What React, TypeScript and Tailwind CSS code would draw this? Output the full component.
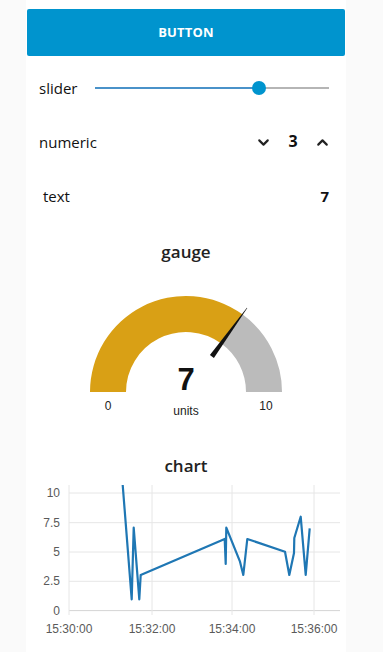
import { ChevronDown, ChevronUp } from "lucide-react";

const series = [
  [96.7, 5],
  [105.7, 119.3],
  [107.7, 47.7],
  [113.3, 119.3],
  [114.7, 95],
  [198.7, 59],
  [199.7, 84],
  [200.3, 47.7],
  [214, 81.7],
  [217.3, 95],
  [221.3, 59],
  [259, 71.7],
  [263.3, 95],
  [268, 73],
  [268.3, 58],
  [274.7, 36.7],
  [279.7, 95],
  [283.7, 48.3],
];

const yTicks = [
  { label: "10", y: 13 },
  { label: "7.5", y: 42.7 },
  { label: "5", y: 72 },
  { label: "2.5", y: 101.3 },
  { label: "0", y: 130.6 },
];

const xTicks = [
  { label: "15:30:00", x: 43 },
  { label: "15:32:00", x: 126 },
  { label: "15:34:00", x: 206 },
  { label: "15:36:00", x: 288 },
];

function Gauge() {
  return (
    <svg width="320" height="159" className="block">
      <path
        d="M 64 111 A 96 96 0 0 1 216.4 33.3 L 195.3 62.5 A 60 60 0 0 0 100 111 Z"
        fill="#d9a015"
      />
      <path
        d="M 216.4 33.3 A 96 96 0 0 1 256 111 L 220 111 A 60 60 0 0 0 195.3 62.5 Z"
        fill="#bbbbbb"
      />
      {/* needle */}
      <polygon
        points="187.9,76.9 183.9,73.9 220.9,26.7 221.3,27.0"
        fill="#111"
      />
      <g fontFamily="'Liberation Sans', Arial, sans-serif" textAnchor="middle">
        <text x="160" y="109" fontSize="31" fontWeight="700" fill="#111">
          7
        </text>
        <text x="160" y="134" fontSize="12" fill="#222">
          units
        </text>
        <text x="82" y="129" fontSize="12" fill="#222">
          0
        </text>
        <text x="240" y="129" fontSize="12" fill="#222">
          10
        </text>
      </g>
    </svg>
  );
}

function Chart() {
  return (
    <svg width="320" height="172" className="block">
      {yTicks.map((t) => (
        <line
          key={t.label}
          x1="43"
          x2="314"
          y1={t.y}
          y2={t.y}
          stroke={t.label === "0" ? "#d4d4d4" : "#e6e6e6"}
          strokeWidth="1"
        />
      ))}
      {xTicks.map((t) => (
        <line
          key={t.label}
          x1={t.x}
          x2={t.x}
          y1="5"
          y2="135"
          stroke="#e6e6e6"
          strokeWidth="1"
        />
      ))}
      <g fontFamily="'Liberation Sans', Arial, sans-serif" fontSize="12" fill="#5a5a5a">
        {yTicks.map((t) => (
          <text key={t.label} x="34" y={t.y + 4} textAnchor="end">
            {t.label}
          </text>
        ))}
        {xTicks.map((t) => (
          <text key={t.label} x={t.x} y="153" textAnchor="middle">
            {t.label}
          </text>
        ))}
      </g>
      <polyline
        points={series.map((p) => p.join(",")).join(" ")}
        fill="none"
        stroke="#1f77b4"
        strokeWidth="2.2"
        strokeLinejoin="round"
      />
    </svg>
  );
}

export default function App() {
  return (
    <div className="min-h-[652px] bg-[#fafafa] font-['Open_Sans',sans-serif] text-[#111]">
      <div className="ml-[26px] w-[320px] bg-white min-h-[652px] flex flex-col">
        {/* Button */}
        <button className="mx-[1px] mt-[9px] h-[47px] rounded-[2px] bg-[#0094ce] text-white text-[13px] font-bold tracking-[0.2px]">
          BUTTON
        </button>

        {/* Slider */}
        <div className="mt-[5px] h-[54px] flex items-center pl-[13px] pr-[17px]">
          <span className="text-[15px] w-[56px]">slider</span>
          <div className="relative flex-1 h-[14px] flex items-center">
            <div className="h-[2px] w-[164px] bg-[#4a92c9]" />
            <div className="h-[2px] flex-1 bg-[#b5b5b5]" />
            <div className="absolute left-[157px] top-0 w-[14px] h-[14px] rounded-full bg-[#0094ce]" />
          </div>
        </div>

        {/* Numeric */}
        <div className="h-[54px] flex items-center pl-[13px] pr-[15px]">
          <span className="text-[15px] flex-1">numeric</span>
          <ChevronDown size={17} strokeWidth={3} className="text-[#222]" />
          <span className="w-[42px] text-center text-[16px] font-bold -mt-[3px]">3</span>
          <ChevronUp size={17} strokeWidth={3} className="text-[#222]" />
        </div>

        {/* Text */}
        <div className="h-[54px] flex items-center justify-between pl-[17px] pr-[17px]">
          <span className="text-[15px]">text</span>
          <span className="text-[15px] font-bold">7</span>
        </div>

        {/* Gauge */}
        <div className="h-[58px] pt-[17px] text-center text-[17px] leading-[24px] font-semibold text-[#222]">
          gauge
        </div>
        <Gauge />

        {/* Chart */}
        <div className="h-[40px] pt-[14px] text-center text-[17px] leading-[24px] font-semibold text-[#222]">
          chart
        </div>
        <Chart />
      </div>
    </div>
  );
}
